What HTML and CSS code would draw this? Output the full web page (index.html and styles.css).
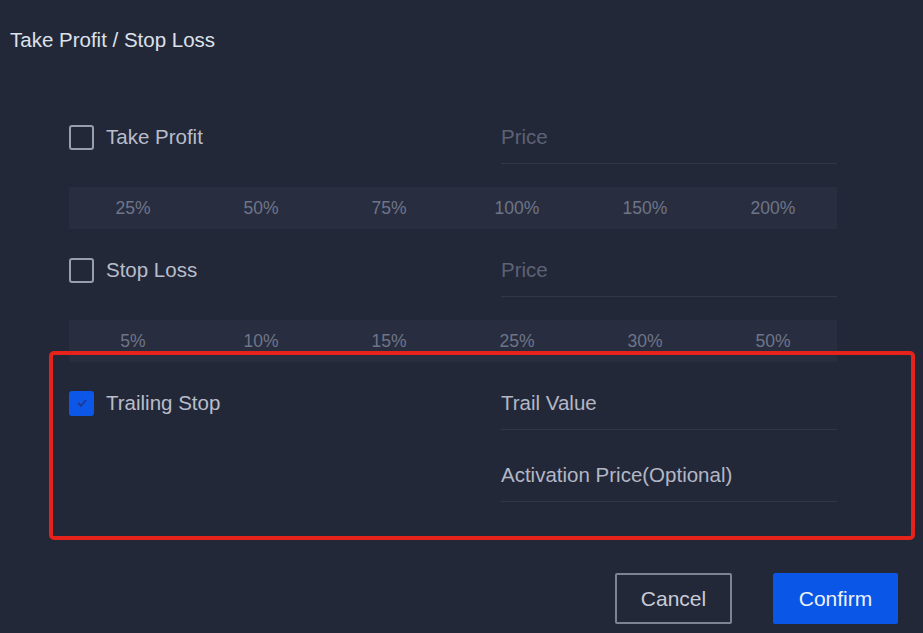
FILE: index.html
```html
<!DOCTYPE html>
<html lang="en">
<head>
  <meta charset="UTF-8">
  <title>Take Profit / Stop Loss</title>
  <meta name="viewport" content="width=device-width, initial-scale=1.0">
  <link rel="stylesheet" href="styles.css">
</head>
<body>

<div class="dialog">
  <h2 class="title">Take Profit / Stop Loss</h2>

  <div class="form">
    <div class="group">
      <div class="row">
        <label class="check"><span class="box"></span>Take Profit</label>
        <div class="fields">
          <div class="field empty">Price</div>
        </div>
      </div>
      <div class="presets">
        <span>25%</span><span>50%</span><span>75%</span><span>100%</span><span>150%</span><span>200%</span>
      </div>
    </div>

    <div class="group">
      <div class="row">
        <label class="check"><span class="box"></span>Stop Loss</label>
        <div class="fields">
          <div class="field empty">Price</div>
        </div>
      </div>
      <div class="presets">
        <span>5%</span><span>10%</span><span>15%</span><span>25%</span><span>30%</span><span>50%</span>
      </div>
    </div>

    <div class="group trailing">
      <div class="highlight"></div>
      <div class="row">
        <label class="check">
          <span class="box checked">
            <svg width="12" height="10" viewBox="0 0 12 10"><polyline points="2,5 5,8 10,2" fill="none" stroke="#21378f" stroke-width="1.8"/></svg>
          </span>Trailing Stop
        </label>
        <div class="fields">
          <div class="field">Trail Value</div>
          <div class="field">Activation Price(Optional)</div>
        </div>
      </div>
    </div>
  </div>

  <div class="actions">
    <button class="btn cancel">Cancel</button>
    <button class="btn confirm">Confirm</button>
  </div>
</div>

</body>
</html>
```

FILE: styles.css
```css
body {
  margin: 0;
  background-color: #232838;
  font-family: 'Liberation Sans', Arial, sans-serif;
}
.dialog {
  padding: 28px 25px 0 10px;
}
.title {
  margin: 0;
  font-size: 20.5px;
  font-weight: normal;
  line-height: 24px;
  color: #dde1ea;
}
.form {
  margin: 60px 0 0 59px;
  width: 768px;
}
.group {
  margin-bottom: 16px;
}
.row {
  display: flex;
  align-items: flex-start;
}
.check {
  width: 432px;
  height: 50px;
  display: flex;
  align-items: center;
  gap: 12px;
  font-size: 20.5px;
  color: #b9bdca;
}
.box {
  width: 21px;
  height: 21px;
  border: 2px solid #989eab;
  border-radius: 3px;
  display: flex;
  align-items: center;
  justify-content: center;
}
.box.checked {
  background-color: #0d57e8;
  border-color: #0d57e8;
}
.fields {
  width: 336px;
  display: flex;
  flex-direction: column;
  gap: 20px;
}
.field {
  height: 52px;
  box-sizing: border-box;
  padding-bottom: 1px;
  border-bottom: 1px solid #31374a;
  display: flex;
  align-items: center;
  font-size: 20.5px;
  color: #b3b7c5;
}
.field.empty {
  color: #5d6275;
}
.presets {
  margin-top: 23px;
  height: 42px;
  display: grid;
  grid-template-columns: repeat(6, 1fr);
  align-items: center;
  background-color: #282d3f;
}
.presets span {
  text-align: center;
  font-size: 17.5px;
  color: #6f7588;
}
.trailing {
  position: relative;
  margin-bottom: 0;
}
.highlight {
  position: absolute;
  top: -27px;
  bottom: -38px;
  left: -20px;
  right: -78px;
  border: 4px solid #e5231b;
  border-radius: 5px;
  pointer-events: none;
}
.actions {
  margin-top: 71px;
  display: flex;
  justify-content: flex-end;
  gap: 41px;
}
.btn {
  height: 51px;
  border-radius: 2px;
  font-family: inherit;
  font-size: 21px;
}
.cancel {
  width: 117px;
  background-color: transparent;
  border: 2px solid #7e8391;
  color: #c8ccd6;
}
.confirm {
  width: 125px;
  background-color: #0a56e6;
  border: none;
  color: #eef2fb;
}
```
